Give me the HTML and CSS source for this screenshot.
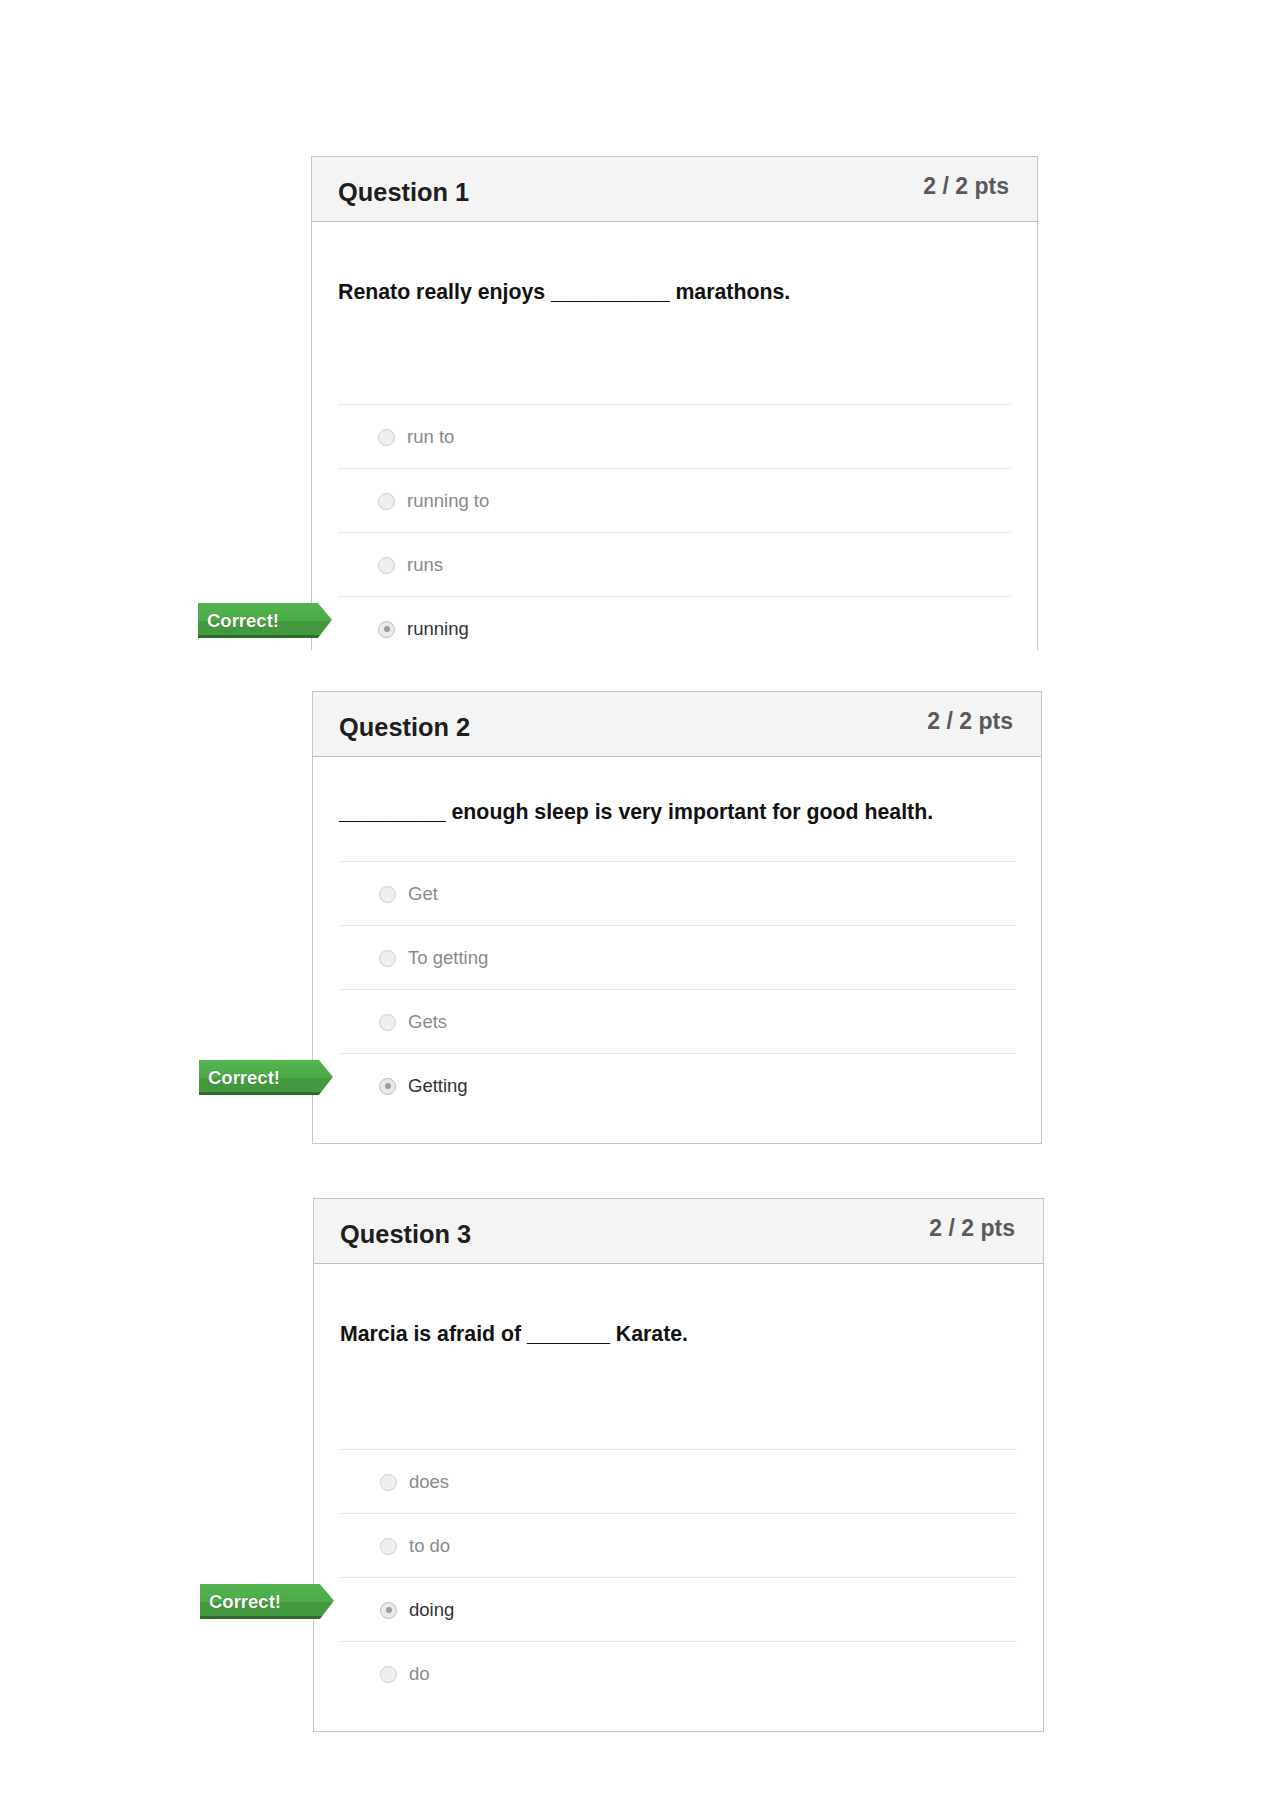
FILE: index.html
```html
<!DOCTYPE html>
<html lang="en">
<head>
<meta charset="utf-8">
<title>Quiz results</title>
<link rel="stylesheet" href="styles.css">
</head>
<body>
<main class="page">
  <section class="card card--q1 card--cut">
    <header class="card__head">
      <h2 class="card__title">Question 1</h2>
      <span class="card__pts">2 / 2 pts</span>
    </header>
    <div class="card__body">
      <p class="card__text">Renato really enjoys __________ marathons.</p>
      <ul class="answers">
        <li class="answer"><span class="radio"></span><span class="answer__label">run to</span></li>
        <li class="answer"><span class="radio"></span><span class="answer__label">running to</span></li>
        <li class="answer"><span class="radio"></span><span class="answer__label">runs</span></li>
        <li class="answer answer--picked"><span class="badge">Correct!</span><span class="radio radio--on"></span><span class="answer__label">running</span></li>
      </ul>
    </div>
  </section>

  <section class="card card--q2">
    <header class="card__head">
      <h2 class="card__title">Question 2</h2>
      <span class="card__pts">2 / 2 pts</span>
    </header>
    <div class="card__body">
      <p class="card__text">_________ enough sleep is very important for good health.</p>
      <ul class="answers">
        <li class="answer"><span class="radio"></span><span class="answer__label">Get</span></li>
        <li class="answer"><span class="radio"></span><span class="answer__label">To getting</span></li>
        <li class="answer"><span class="radio"></span><span class="answer__label">Gets</span></li>
        <li class="answer answer--picked"><span class="badge">Correct!</span><span class="radio radio--on"></span><span class="answer__label">Getting</span></li>
      </ul>
    </div>
  </section>

  <section class="card card--q3">
    <header class="card__head">
      <h2 class="card__title">Question 3</h2>
      <span class="card__pts">2 / 2 pts</span>
    </header>
    <div class="card__body">
      <p class="card__text">Marcia is afraid of _______ Karate.</p>
      <ul class="answers">
        <li class="answer"><span class="radio"></span><span class="answer__label">does</span></li>
        <li class="answer"><span class="radio"></span><span class="answer__label">to do</span></li>
        <li class="answer answer--picked"><span class="badge">Correct!</span><span class="radio radio--on"></span><span class="answer__label">doing</span></li>
        <li class="answer"><span class="radio"></span><span class="answer__label">do</span></li>
      </ul>
    </div>
  </section>
</main>
</body>
</html>
```
FILE: styles.css
```css
* { box-sizing: border-box; }

html, body {
  margin: 0;
  padding: 0;
  background: #ffffff;
}

body {
  font-family: "Liberation Sans", Arial, sans-serif;
  color: #222;
  min-height: 1811px;
}

.page {
  padding-top: 156px;
  display: flex;
  flex-direction: column;
  align-items: flex-start;
}

.card {
  border: 1px solid #c6c6c6;
  background: #fff;
}

.card--q1 { margin-left: 311px; width: 727px; }
.card--q2 { margin-left: 312px; width: 730px; margin-top: 41px; }
.card--q3 { margin-left: 313px; width: 731px; margin-top: 54px; }

.card--cut { border-bottom: none; }

.card__head {
  height: 65px;
  background: #f4f4f4;
  border-bottom: 1px solid #bdbdbd;
  display: flex;
  justify-content: space-between;
  align-items: flex-start;
  padding: 0 28px 0 26px;
}

.card__title {
  margin: 20px 0 0;
  font-size: 25.4px;
  line-height: 30px;
  font-weight: bold;
  color: #1e1e1e;
}

.card__pts {
  margin-top: 16px;
  font-size: 23px;
  line-height: 26px;
  font-weight: bold;
  color: #595959;
}

.card__body {
  padding: 0 26px 26px;
}

.card--cut .card__body { padding-bottom: 0; }

.card__text {
  margin: 0;
  font-size: 21.3px;
  line-height: 24px;
  font-weight: bold;
  color: #111;
}

.card--q1 .card__text { padding: 58px 0 100px; }
.card--q2 .card__text { padding: 43px 0 37px; }
.card--q3 .card__text { padding: 58px 0 103px; }

.answers {
  list-style: none;
  margin: 0;
  padding: 0;
}

.answer {
  position: relative;
  display: flex;
  align-items: center;
  border-top: 1px solid #e7e7e7;
  padding: 21px 0 20px 40px;
  height: 64px;
}

.card--cut .answer:last-child {
  height: 54px;
  padding-bottom: 10px;
  align-items: flex-start;
}

.radio {
  flex: none;
  width: 17px;
  height: 17px;
  border-radius: 50%;
  border: 1px solid #cdcdcd;
  background: #eeeeee;
  position: relative;
}

.card--cut .answer:last-child .radio { margin-top: 2.5px; }

.radio--on {
  border-color: #bdbdbd;
  background: #e9e9e9;
}

.radio--on::after {
  content: "";
  position: absolute;
  left: 4.5px;
  top: 4.5px;
  width: 6px;
  height: 6px;
  border-radius: 50%;
  background: #9d9d9d;
}

.answer__label {
  margin-left: 12px;
  font-size: 18.5px;
  line-height: 22px;
  color: #8a8a8a;
}

.answer--picked .answer__label { color: #333; }

.badge {
  position: absolute;
  left: -140px;
  top: 6px;
  width: 134px;
  height: 35px;
  padding: 1px 0 0 9px;
  font-size: 18.5px;
  line-height: 34px;
  font-weight: bold;
  color: #fff;
  text-shadow: 0 0 1px rgba(0, 0, 0, 0.45);
  background: linear-gradient(to bottom, #53b44f 0%, #4bab47 52%, #44993f 53%, #43973e 90%, #2e6b2b 91%, #2e6b2b 100%);
  clip-path: polygon(0 0, 89.5% 0, 100% 48%, 89.5% 100%, 0 100%);
}
```
